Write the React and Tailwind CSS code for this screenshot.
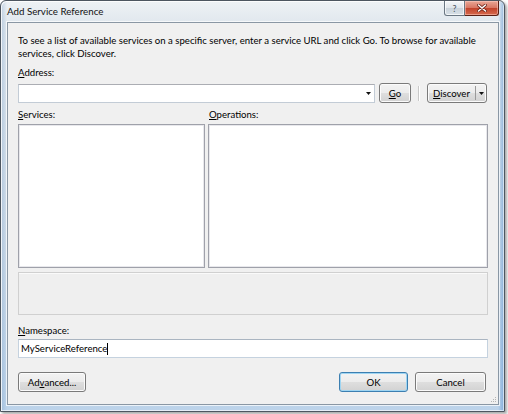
import React from "react";

const F = "font-['Lato','Open_Sans',sans-serif]";

function Btn({ children, className = "", def = false }) {
  return (
    <div
      className={`flex items-center justify-center rounded-[3px] border text-black ${
        def
          ? "border-[#3c7fb1] shadow-[inset_0_0_0_1px_#9fd5f2]"
          : "border-[#7a7a7a] shadow-[inset_0_0_0_1px_#fbfbfb]"
      } bg-[linear-gradient(180deg,#f3f3f3_0%,#ececec_48%,#dedede_52%,#d2d2d2_100%)] ${className}`}
    >
      {children}
    </div>
  );
}

function Tri({ className = "" }) {
  return (
    <svg width="5" height="3" viewBox="0 0 5 3" className={className}>
      <path d="M0 0H5L2.5 3Z" fill="#111" />
    </svg>
  );
}

export default function App() {
  return (
    <div className={`w-[508px] h-[414px] bg-white overflow-hidden ${F} text-[9.6px] leading-[13px] text-black`}>
      <div className="w-[505px] h-[412px] flex flex-col rounded-t-[6px] border border-[#4d5660] bg-[linear-gradient(90deg,rgba(110,150,195,0.35)_0px,rgba(110,150,195,0)_6px,rgba(110,150,195,0)_calc(100%_-_6px),rgba(80,140,205,0.55)_100%),linear-gradient(180deg,#eef2f5_0px,#e1e8ee_21px,#d0dde9_60%,#bcd3ea_100%)] shadow-[2px_2px_3px_rgba(0,0,0,0.35),inset_1px_1px_0_rgba(255,255,255,0.8),inset_-1px_-1px_0_rgba(255,255,255,0.6)]">
        {/* title bar */}
        <div className="h-[21px] flex items-start pl-[6px] pr-[5px]">
          <div className="mt-[4px] text-[9.75px] leading-[13px] text-[#111]">Add Service Reference</div>
          <div className="ml-auto flex">
            <div className="w-[21px] h-[15px] rounded-bl-[3px] border border-t-0 border-[#6a7682] bg-[linear-gradient(180deg,#f4f6f8_0%,#dfe5ea_50%,#c9d2da_51%,#d8e0e7_100%)] flex items-center justify-center text-[9px] leading-none text-[#4a5560] shadow-[inset_0_0_0_1px_rgba(255,255,255,0.7)]">
              ?
            </div>
            <div className="w-[34px] h-[15px] rounded-br-[3px] border border-t-0 border-l-0 border-[#5b1f14] bg-[linear-gradient(180deg,#e9a796_0%,#d97763_48%,#c2432b_52%,#d66a4e_100%)] flex items-center justify-center shadow-[inset_0_0_0_1px_rgba(255,210,200,0.5)]">
              <svg width="10" height="8" viewBox="0 0 10 8">
                <path d="M1.5 1L8.5 7M8.5 1L1.5 7" stroke="#6b2418" strokeWidth="3" strokeLinecap="round" />
                <path d="M1.5 1L8.5 7M8.5 1L1.5 7" stroke="#ffffff" strokeWidth="1.6" strokeLinecap="round" />
              </svg>
            </div>
          </div>
        </div>

        {/* client */}
        <div className="relative ml-[6px] mr-[5px] mb-[6px] flex-1 border border-[#8a97a4] bg-[#f0f0f0] shadow-[0_0_0_1px_rgba(255,255,255,0.7)] px-[10px] pt-[11px] flex flex-col">
          <p className="h-[26px]">
            To see a list of available services on a specific server, enter a service URL and click Go. To browse for available services, click Discover.
          </p>

          <div className="mt-[6px] h-[13px]">
            <span className="underline underline-offset-[1px]">A</span>ddress:
          </div>

          <div className="mt-[4px] h-[20px] flex items-center">
            <div className="w-[357px] h-[19px] bg-white border border-[#c3ccd6] border-t-[#abadb3] flex items-center justify-end pr-[3px]">
              <Tri />
            </div>
            <Btn className="ml-[4px] w-[32px] h-[20px]">
              <span className="underline underline-offset-[1px]">G</span>o
            </Btn>
            <div className="ml-[7px] w-[2px] h-[15px] flex">
              <div className="w-[1px] bg-[#c9c9c9]" />
              <div className="w-[1px] bg-white" />
            </div>
            <Btn className="ml-[7px] w-[60px] h-[20px] !justify-start">
              <div className="w-[47px] flex justify-center">
                <span>
                  <span className="underline underline-offset-[1px]">D</span>iscover
                </span>
              </div>
              <div className="w-[1px] h-[14px] bg-[#9a9a9a]" />
              <div className="flex-1 flex justify-center">
                <Tri />
              </div>
            </Btn>
          </div>

          <div className="mt-[5px] grid grid-cols-[187px_1fr] gap-x-[3px]">
            <div className="h-[13px]">
              <span className="underline underline-offset-[1px]">S</span>ervices:
            </div>
            <div className="h-[13px] pl-[1px]">
              <span className="underline underline-offset-[1px]">O</span>perations:
            </div>
            <div className="mt-[3px] h-[144px] bg-white border border-[#9fa1aa] shadow-[inset_0_0_0_1px_#e8e8ec]" />
            <div className="mt-[3px] h-[144px] bg-white border border-[#9fa1aa] shadow-[inset_0_0_0_1px_#e8e8ec]" />
          </div>

          <div className="mt-[4px] h-[43px] border border-[#d0d0d0] bg-[#efefef] shadow-[inset_0_1px_0_#fafafa]" />

          <div className="mt-[9px] h-[13px]">
            <span className="underline underline-offset-[1px]">N</span>amespace:
          </div>
          <div className="mt-[2px] h-[19px] bg-white border border-[#c5d2df] border-t-[#aab5c1] flex items-center pl-[2px]">
            <span>MyServiceReference</span>
            <span className="w-[1px] h-[12px] bg-black" />
          </div>

          <div className="mt-[14px] h-[20px] flex">
            <Btn className="w-[68px] h-[20px]">
              <span>
                Ad<span className="underline underline-offset-[1px]">v</span>anced...
              </span>
            </Btn>
            <Btn def className="ml-auto w-[69px] h-[20px]">OK</Btn>
            <Btn className="ml-[7px] mr-[2px] w-[71px] h-[20px]">Cancel</Btn>
          </div>

          {/* resize grip */}
          <svg width="7" height="7" viewBox="0 0 7 7" className="absolute right-[1px] bottom-[1px]">
            <rect x="5" y="1" width="1" height="1" fill="#b5b5b5" />
            <rect x="3" y="3" width="1" height="1" fill="#b5b5b5" />
            <rect x="5" y="3" width="1" height="1" fill="#b5b5b5" />
            <rect x="1" y="5" width="1" height="1" fill="#b5b5b5" />
            <rect x="3" y="5" width="1" height="1" fill="#b5b5b5" />
            <rect x="5" y="5" width="1" height="1" fill="#b5b5b5" />
          </svg>
        </div>
      </div>
    </div>
  );
}
